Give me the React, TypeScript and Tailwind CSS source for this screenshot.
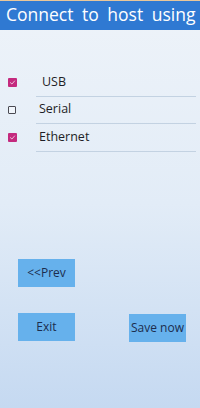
import React from 'react'

type Option = { label: string; checked: boolean; indent: string }

const options: Option[] = [
  { label: 'USB', checked: true, indent: 'pl-[6px]' },
  { label: 'Serial', checked: false, indent: 'pl-[3px]' },
  { label: 'Ethernet', checked: true, indent: 'pl-[3px]' },
]

function CheckBox({ checked }: { checked: boolean }) {
  if (!checked) {
    return <div className="w-[8px] h-[8px] border border-[#4a4a52] rounded-[1px] bg-white/40" />
  }
  return (
    <div className="w-[9px] h-[9px] bg-[#c42a7e] rounded-[1px] flex items-center justify-center">
      <svg viewBox="0 0 10 10" className="w-[7px] h-[7px]">
        <path d="M2 5.2 L4.2 7.2 L8 2.8" fill="none" stroke="#f4d8ea" strokeWidth="1.2" strokeLinecap="round" strokeLinejoin="round" />
      </svg>
    </div>
  )
}

function Button({ label }: { label: string }) {
  return (
    <div className="w-[57px] h-[28px] bg-[#66b1ec] flex items-center justify-center text-[12px] text-[#1c2d4e]">
      {label}
    </div>
  )
}

export default function App() {
  return (
    <div
      className="w-[200px] h-[408px] flex flex-col bg-gradient-to-b from-[#eef3f9] via-[#e2ecf7] to-[#c5d9f1] overflow-hidden"
      style={{ fontFamily: '"Open Sans", "Noto Sans", sans-serif' }}
    >
      <div className="h-[1px] bg-[#e9c79a]" />
      <div className="h-[29px] bg-[#2f79d2] flex items-center pl-[6px] pb-[2px] text-white text-[17.5px] leading-none whitespace-nowrap [word-spacing:4px]">
        Connect to host using
      </div>

      <div className="mt-[39px] flex flex-col">
        {options.map((o) => (
          <div key={o.label} className="flex items-stretch h-[27.5px]">
            <div className="w-[36px] flex items-center pl-[8px]">
              <CheckBox checked={o.checked} />
            </div>
            <div className={`flex-1 mr-[4px] border-b border-[#c3d2e2] flex items-center text-[12.5px] text-[#1e1e26] ${o.indent}`}>
              {o.label}
            </div>
          </div>
        ))}
      </div>

      <div className="mt-[107px] pl-[18px]">
        <Button label="<<Prev" />
      </div>

      <div className="mt-[26px] flex pl-[18px]">
        <Button label="Exit" />
        <div className="ml-[54px] mt-[1px]">
          <Button label="Save now" />
        </div>
      </div>
    </div>
  )
}
